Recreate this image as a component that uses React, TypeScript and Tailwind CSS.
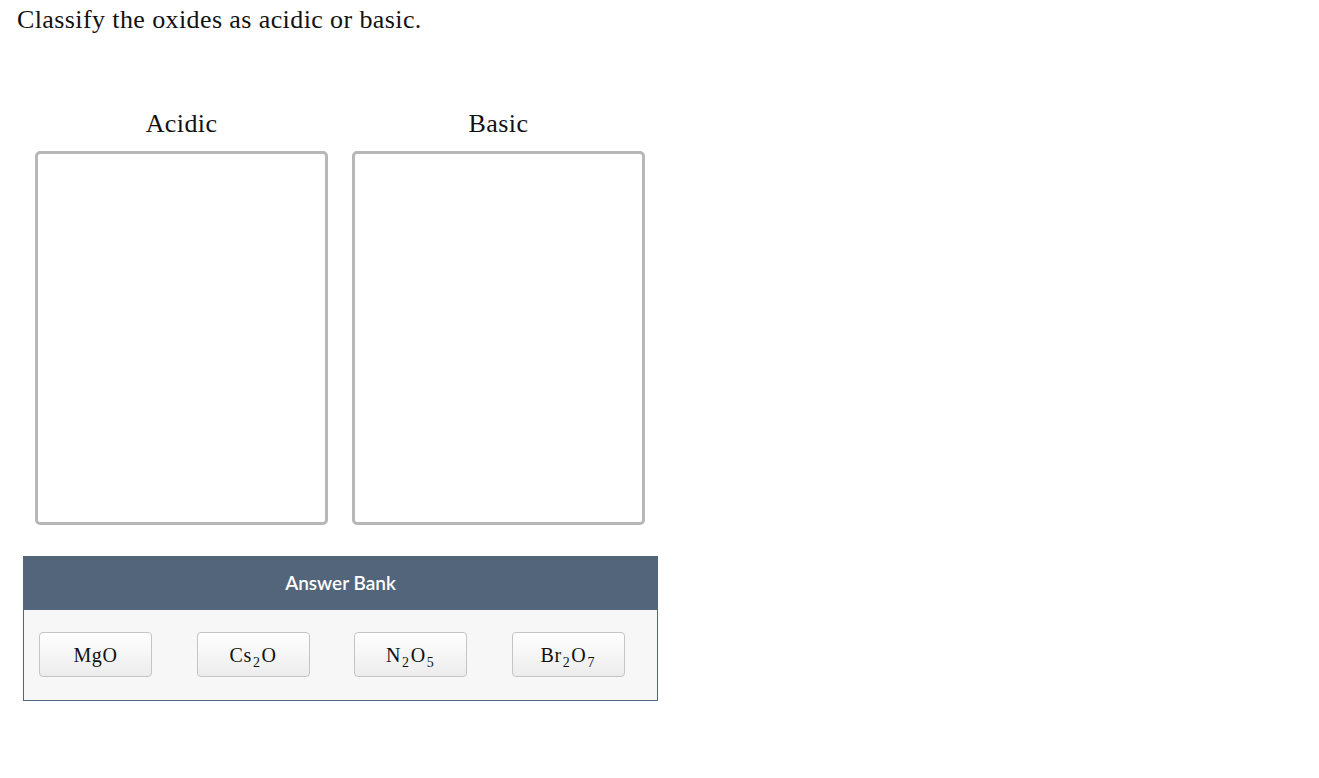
import React from 'react';

const SERIF = "font-['Liberation_Serif','Times_New_Roman',serif]";

type Part = { text: string; sub?: boolean };

const ANSWERS: { id: string; parts: Part[] }[] = [
  { id: 'mgo', parts: [{ text: 'MgO' }] },
  { id: 'cs2o', parts: [{ text: 'Cs' }, { text: '2', sub: true }, { text: 'O' }] },
  {
    id: 'n2o5',
    parts: [
      { text: 'N' },
      { text: '2', sub: true },
      { text: 'O' },
      { text: '5', sub: true },
    ],
  },
  {
    id: 'br2o7',
    parts: [
      { text: 'Br' },
      { text: '2', sub: true },
      { text: 'O' },
      { text: '7', sub: true },
    ],
  },
];

function Formula({ parts }: { parts: Part[] }) {
  return (
    <span className="tracking-[0.6px]">
      {parts.map((p, i) =>
        p.sub ? (
          <sub key={i} className="text-[14px] relative top-[5px] mx-[1px]">
            {p.text}
          </sub>
        ) : (
          <span key={i}>{p.text}</span>
        )
      )}
    </span>
  );
}

function DropZone({ label }: { label: string }) {
  return (
    <div className="flex flex-col w-[293px]">
      <div className={`${SERIF} text-[26px] tracking-[0.4px] text-[#111] text-center leading-none h-[46px] pt-[6px]`}>
        {label}
      </div>
      <div className="h-[374px] border-[3px] border-[#b7b7b7] rounded-[5px] bg-white" />
    </div>
  );
}

export default function App() {
  return (
    <div className="min-h-screen bg-white text-[#111]">
      <div className={`${SERIF} text-[26px] tracking-[0.4px] leading-none pl-[17px] pt-[7px]`}>
        Classify the oxides as acidic or basic.
      </div>

      <div className="flex gap-[24px] pl-[35px] mt-[72px]">
        <DropZone label="Acidic" />
        <DropZone label="Basic" />
      </div>

      <div className="ml-[23px] mt-[31px] w-[635px] border border-[#52657a]">
        <div className="h-[53px] bg-[#52657a] flex items-center justify-center">
          <span className="font-['Lato','Open_Sans',sans-serif] text-[19px] font-semibold text-white">
            Answer Bank
          </span>
        </div>
        <div className="bg-[#f7f7f7] flex gap-[44.6px] pl-[15px] pt-[22px] pb-[23px]">
          {ANSWERS.map((a) => (
            <button
              key={a.id}
              type="button"
              className={`${SERIF} w-[113px] h-[45px] shrink-0 rounded-[4px] border border-[#c4c4c4] bg-gradient-to-b from-white to-[#ececec] text-[20px] text-[#111] flex items-center justify-center`}
            >
              <Formula parts={a.parts} />
            </button>
          ))}
        </div>
      </div>
    </div>
  );
}
